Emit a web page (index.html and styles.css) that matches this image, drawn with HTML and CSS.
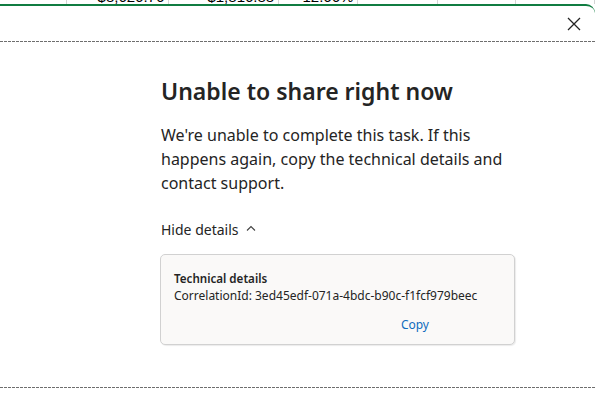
FILE: index.html
```html
<!DOCTYPE html>
<html lang="en">
<head>
    <meta charset="UTF-8">
    <title>Unable to share right now</title>
    <link rel="stylesheet" href="styles.css">
</head>

<body>
    <!--sheet behind the dialog-->
    <div class="sheet">
        <div class="row">
            <span class="cell c-a"></span>
            <span class="cell c-b">$8,626.76</span>
            <span class="cell c-c">$1,816.88</span>
            <span class="cell c-d">12.66%</span>
            <span class="cell c-e"></span>
            <span class="cell c-f"></span>
            <span class="cell c-g"></span>
        </div>
    </div>

    <!--dialog-->
    <div class="dialog">
        <div class="head">
            <button class="close" aria-label="Close">
                <svg viewBox="0 0 14 14">
                    <path d="M1 1 L13 13 M13 1 L1 13"></path>
                </svg>
            </button>
        </div>
        <div class="rule"></div>

        <div class="content">
            <h1 class="title">Unable to share right now</h1>
            <p class="msg">We're unable to complete this task. If this happens again, copy the technical details and contact support.</p>

            <button class="toggle">Hide details
                <svg viewBox="0 0 10 6">
                    <path d="M1 5.5 L5 1.5 L9 5.5"></path>
                </svg>
            </button>

            <div class="details">
                <div class="d-title">Technical details</div>
                <div class="d-id">CorrelationId: 3ed45edf-071a-4bdc-b90c-f1fcf979beec</div>
                <div class="d-foot">
                    <button class="copy">Copy</button>
                </div>
            </div>
        </div>

        <div class="rule"></div>
    </div>
</body>
</html>
```

FILE: styles.css
```css
html,
body {
    margin: 0;
    padding: 0;
    width: 100%;
    height: 100%;
}

body {
    overflow: hidden;
    background: #fff;
    font-family: "Noto Sans", "Open Sans", sans-serif;
    color: #242424;
}

/*sheet strip*/
.sheet {
    height: 4px;
    overflow: hidden;
    background: #fff;
}

.row {
    display: flex;
    height: 20px;
    margin-top: -13px;
    font-family: "Liberation Sans", Arial, sans-serif;
    font-size: 15px;
    line-height: 20px;
}

.cell {
    box-sizing: border-box;
    border-right: 1px solid #d4d4d4;
    text-align: right;
    padding-right: 4px;
    color: #000;
}

.c-a { width: 68px; }
.c-b { width: 103px; }
.c-c { width: 111px; }
.c-d { width: 80px; }
.c-e { width: 80px; }
.c-f { width: 79px; }
.c-g { width: 80px; }

/*dialog box*/
.dialog {
    height: 393px;
    background: #fff;
    border-top: 2px solid #107c41;
    border-top-right-radius: 9px;
    box-sizing: border-box;
}

.head {
    display: flex;
    justify-content: flex-end;
    height: 35px;
}

.close {
    width: 30px;
    height: 30px;
    margin: 3px 6px 0 0;
    padding: 8px;
    border: 0;
    background: none;
}

.close svg {
    width: 100%;
    height: 100%;
    display: block;
}

.close path {
    stroke: #242424;
    stroke-width: 1.3;
    fill: none;
}

/*dotted divider*/
.rule {
    height: 1px;
    background: repeating-linear-gradient(to right, #6e6e6e 0 3px, transparent 3px 4px);
}

.content {
    height: 345px;
    padding: 33px 0 0 161px;
    box-sizing: border-box;
}

.title {
    margin: 0;
    font-size: 23px;
    font-weight: 600;
    line-height: 32px;
}

.msg {
    width: 360px;
    margin: 16px 0 0;
    font-size: 16px;
    line-height: 24px;
}

.toggle {
    display: flex;
    align-items: center;
    gap: 8px;
    margin: 25px 0 0;
    padding: 0;
    border: 0;
    background: none;
    font-family: inherit;
    font-size: 14px;
    color: #242424;
}

.toggle svg {
    width: 10px;
    height: 6px;
    margin-top: -3px;
}

.toggle path {
    stroke: #424242;
    stroke-width: 1.1;
    fill: none;
}

.details {
    width: 355px;
    height: 91px;
    margin-top: 15px;
    margin-left: -1px;
    padding: 15px 13px 0;
    box-sizing: border-box;
    background: #faf9f8;
    border: 1px solid #d1d1d1;
    border-radius: 5px;
    box-shadow: 1px 1px 1px rgba(0, 0, 0, .08);
    font-size: 12px;
    line-height: 17px;
}

.d-title {
    font-size: 11.6px;
    font-weight: 600;
}

.d-foot {
    display: flex;
    justify-content: flex-end;
    padding-right: 72px;
    margin-top: 12px;
}

.copy {
    padding: 0;
    border: 0;
    background: none;
    font-family: inherit;
    font-size: 12px;
    color: #0f6cbd;
}
```
